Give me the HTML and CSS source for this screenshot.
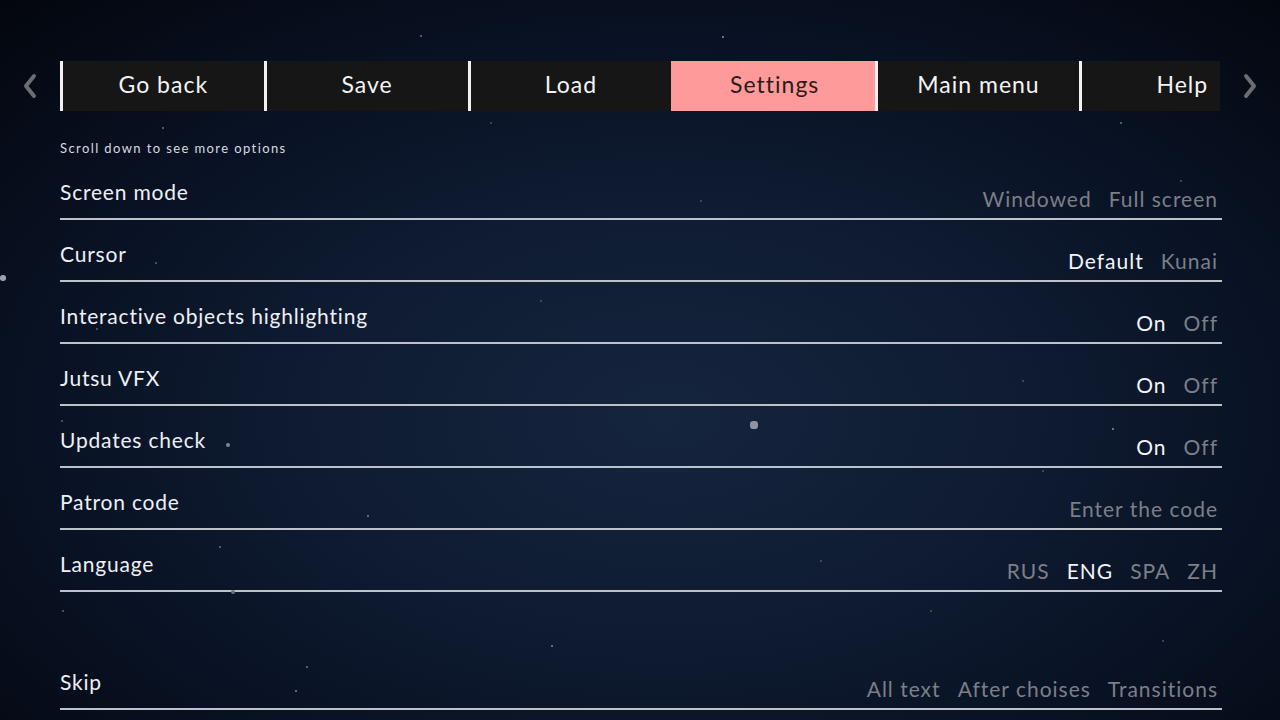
FILE: index.html
```html
<!DOCTYPE html>
<html>
  <head>
    <meta charset="utf-8">
    <meta name="viewport" content="width=device-width,initial-scale=1.0">
    <title>Settings</title>
    <link rel="stylesheet" href="styles.css">
  </head>
  <body>
    <div class="sky"></div>

    <nav class="menu">
      <div class="arrow">
        <svg width="16" height="26" viewBox="0 0 16 26"><polyline points="12,3 4,13 12,23" /></svg>
      </div>
      <div class="tabs">
        <div class="tab">Go back</div>
        <div class="tab">Save</div>
        <div class="tab">Load</div>
        <div class="tab active">Settings</div>
        <div class="tab">Main menu</div>
        <div class="tab">Help</div>
      </div>
      <div class="arrow">
        <svg width="16" height="26" viewBox="0 0 16 26"><polyline points="4,3 12,13 4,23" /></svg>
      </div>
    </nav>

    <main class="options">
      <p class="hint">Scroll down to see more options</p>

      <div class="row">
        <span class="label">Screen mode</span>
        <span class="choices"><span>Windowed</span><span>Full screen</span></span>
      </div>
      <div class="row">
        <span class="label">Cursor</span>
        <span class="choices"><span class="on">Default</span><span>Kunai</span></span>
      </div>
      <div class="row">
        <span class="label">Interactive objects highlighting</span>
        <span class="choices"><span class="on">On</span><span>Off</span></span>
      </div>
      <div class="row">
        <span class="label">Jutsu VFX</span>
        <span class="choices"><span class="on">On</span><span>Off</span></span>
      </div>
      <div class="row">
        <span class="label">Updates check</span>
        <span class="choices"><span class="on">On</span><span>Off</span></span>
      </div>
      <div class="row">
        <span class="label">Patron code</span>
        <span class="choices"><span>Enter the code</span></span>
      </div>
      <div class="row">
        <span class="label">Language</span>
        <span class="choices"><span>RUS</span><span class="on">ENG</span><span>SPA</span><span>ZH</span></span>
      </div>

      <div class="row gap">
        <span class="label">Skip</span>
        <span class="choices"><span>All text</span><span>After choises</span><span>Transitions</span></span>
      </div>
    </main>
  </body>
</html>
```

FILE: styles.css
```css
html, body, p {
    margin: 0;
    padding: 0;
}
body {
    width: 1280px;
    height: 720px;
    overflow: hidden;
    position: relative;
    font-family: Lato, "Noto Sans", sans-serif;
    color: #eef0f4;
    background: radial-gradient(ellipse 75% 80% at 52% 58%, #15253d 0%, #0f1c33 35%, #091224 65%, #03060d 100%);
}

/* star field, one dot stretched out by box-shadows */
.sky {
    position: absolute;
    left: 0;
    top: 0;
    width: 2px;
    height: 2px;
    border-radius: 50%;
    background: transparent;
    box-shadow:
        722px 36px 0 0 #8d96a6,
        420px 35px 0 0 #6c7482,
        162px 127px 0 0 #6c7482,
        1120px 122px 0 0 #6c7482,
        490px 122px 0 0 #4a5262,
        2px 277px 0 2px #9aa2b0,
        753px 424px 0 3px #8d95a4,
        1112px 428px 0 0 #8d96a6,
        227px 444px 0 1px #7e8696,
        367px 515px 0 0 #7e8696,
        219px 546px 0 0 #6c7482,
        232px 591px 0 1px #6c7482,
        551px 645px 0 0 #7e8696,
        306px 666px 0 0 #6c7482,
        295px 690px 0 0 #7e8696,
        62px 610px 0 0 #5c6472,
        61px 420px 0 0 #5c6472,
        96px 328px 0 0 #5c6472,
        155px 262px 0 0 #5c6472,
        700px 200px 0 0 #4e5666,
        540px 300px 0 0 #4e5666,
        1022px 380px 0 0 #4e5666,
        820px 560px 0 0 #4e5666,
        1042px 470px 0 0 #4e5666,
        1162px 640px 0 0 #4e5666,
        930px 610px 0 0 #4e5666,
        1180px 180px 0 0 #4e5666;
}

.menu {
    display: flex;
    align-items: center;
    padding-top: 61px;
}
.arrow {
    width: 60px;
    height: 50px;
    display: flex;
    align-items: center;
    justify-content: center;
}
.arrow svg {
    fill: none;
    stroke: #6b6d73;
    stroke-width: 4;
    stroke-linecap: round;
    stroke-linejoin: round;
}
.tabs {
    display: flex;
    width: 1162px;
    overflow: hidden;
}
.tab {
    flex: 0 0 200.8px;
    height: 50px;
    line-height: 47px;
    text-align: center;
    font-size: 23px;
    letter-spacing: 1px;
    color: #f4f4f4;
    background: #161616;
    border-left: 3px solid #f2f2f2;
}
.tab.active {
    background: #ff9a9a;
    border-left-color: #ff9a9a;
    color: #2a1a1b;
}

.options {
    margin: 0 62px 0 60px;
}
.hint {
    font-size: 13px;
    letter-spacing: 1.4px;
    color: #d8dbe0;
    padding-top: 29px;
    height: 18px;
}
.row {
    display: flex;
    justify-content: space-between;
    height: 60px;
    border-bottom: 2px solid #bcc1ca;
    margin-right: -4px;
}
.row.gap {
    margin-top: 56px;
}
.label {
    padding-top: 21px;
    font-size: 21px;
    letter-spacing: 0.8px;
}
.choices {
    align-self: flex-end;
    padding-bottom: 7px;
    padding-right: 4px;
    display: flex;
    gap: 17px;
    font-size: 21px;
    letter-spacing: 1px;
    color: #7c7f86;
}
.choices .on {
    color: #f4f4f6;
}
```
